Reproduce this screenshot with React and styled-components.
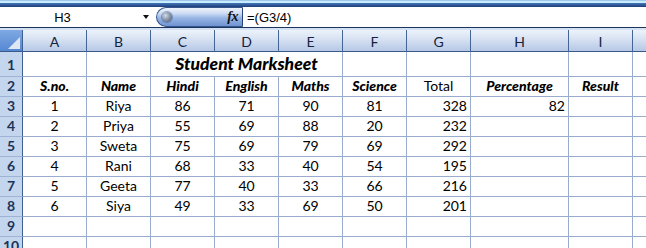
import React from 'react';
import styled, { createGlobalStyle, css } from 'styled-components';

const GlobalStyle = createGlobalStyle`
  html, body {
    margin: 0;
    padding: 0;
    background: #fff;
    overflow: hidden;
  }
  body {
    width: 646px;
    height: 248px;
  }
`;

const Window = styled.div`
  width: 646px;
  height: 248px;
  overflow: hidden;
  display: flex;
  flex-direction: column;
  background: #fff;
`;

const RibbonEdge = styled.div`
  height: 7px;
  flex: none;
  background: linear-gradient(
    to bottom,
    #a2c5ec 0px,
    #a2c5ec 1px,
    #c6eefd 1px,
    #c6eefd 3px,
    #4677bd 3px,
    #30599a 5px,
    #1f3f74 7px
  );
`;

const FormulaBar = styled.div`
  height: 20px;
  flex: none;
  display: flex;
  align-items: stretch;
  font-family: 'Liberation Sans', Arial, sans-serif;
  font-size: 13px;
  color: #000;
`;

const NameBox = styled.div`
  width: 152px;
  display: flex;
  align-items: center;
`;

const NameText = styled.span`
  flex: 1;
  text-align: center;
  padding-right: 20px;
  padding-left: 2px;
`;

const DropArrow = styled.span`
  width: 0;
  height: 0;
  margin-right: 3px;
  border-left: 3.5px solid transparent;
  border-right: 3.5px solid transparent;
  border-top: 4px solid #111;
`;

const FxPill = styled.div`
  margin-left: 4px;
  width: 87px;
  box-sizing: border-box;
  border: 1px solid #34558f;
  border-right: 1px solid #2a4679;
  border-radius: 10px 0 0 10px;
  background: linear-gradient(
    to bottom,
    #eef3fb 0%,
    #cddcf3 30%,
    #98b5e4 55%,
    #6f93d0 100%
  );
  display: flex;
  align-items: center;
  justify-content: space-between;
  padding: 0 3px 0 5px;
`;

const FxKnob = styled.span`
  width: 10px;
  height: 10px;
  border-radius: 50%;
  background: radial-gradient(circle at 35% 35%, #d3dbe7 0%, #7d8aa0 55%, #4a566d 100%);
  box-shadow: 0 0 0 1px rgba(50, 70, 110, 0.4);
`;

const FxLabel = styled.span`
  font-family: 'Liberation Serif', 'Times New Roman', serif;
  font-style: italic;
  font-weight: bold;
  font-size: 14px;
  letter-spacing: -0.5px;
  color: #111;
  padding-right: 1px;
`;

const FormulaText = styled.div`
  flex: 1;
  display: flex;
  align-items: center;
  padding-left: 4px;
`;

const Sheet = styled.div`
  flex: none;
  border-top: 1px solid #1d355b;
  padding-top: 2px;
  background: #d3e1f3;
  display: grid;
  grid-template-columns: 23px repeat(7, 64px) 98px 64px 1fr;
  grid-template-rows: 22px 25px repeat(9, 20px);
  font-family: Lato, 'Open Sans', sans-serif;
  font-size: 14px;
  color: #000;
`;

const Corner = styled.div`
  position: relative;
  box-sizing: border-box;
  border-right: 1px solid #3f5f90;
  border-bottom: 1px solid #3b5a8a;
  background: linear-gradient(to bottom, #7fa9e3, #5587d2);
  &::after {
    content: '';
    position: absolute;
    right: 2px;
    bottom: 2px;
    width: 0;
    height: 0;
    border-left: 12px solid transparent;
    border-bottom: 12px solid #dfe7f3;
  }
`;

const ColHead = styled.div`
  box-sizing: border-box;
  border-right: ${(p) => (p.$last ? 'none' : '1px solid #45659a')};
  border-bottom: 1px solid #3b5a8a;
  background: linear-gradient(to bottom, #eef3fb 0%, #d6e1f2 45%, #b6c8e6 100%);
  display: flex;
  align-items: center;
  justify-content: center;
  padding-top: 1px;
  font-size: 14px;
  color: #16233c;
`;

const RowHead = styled.div`
  box-sizing: border-box;
  border-right: 1px solid #3f5f90;
  border-bottom: 1px solid #9db2d4;
  background: #c4d6ee;
  display: flex;
  align-items: flex-end;
  justify-content: center;
  padding-bottom: ${(p) => (p.$tall ? '3px' : '2px')};
  font-weight: bold;
  font-size: 14px;
  color: #1c3358;
`;

const Cell = styled.div`
  box-sizing: border-box;
  background: #fff;
  border-right: ${(p) => (p.$last ? 'none' : '1px solid #9aabd0')};
  border-bottom: 1px solid #9aabd0;
  display: flex;
  align-items: flex-end;
  padding: 0 3px 2px 3px;
  white-space: nowrap;
  grid-column: ${(p) => (p.$span ? `span ${p.$span}` : 'auto')};
  justify-content: ${(p) =>
    p.$align === 'right' ? 'flex-end' : p.$align === 'left' ? 'flex-start' : 'center'};
  ${(p) =>
    p.$head &&
    css`
      font-weight: 900;
      font-style: italic;
    `}
  ${(p) =>
    p.$title &&
    css`
      font-weight: 900;
      font-style: italic;
      font-size: 17.5px;
      padding-bottom: 2px;
    `}
`;

const columns = ['A', 'B', 'C', 'D', 'E', 'F', 'G', 'H', 'I'];

const headers = [
  { text: 'S.no.', head: true },
  { text: 'Name', head: true },
  { text: 'Hindi', head: true },
  { text: 'English', head: true },
  { text: 'Maths', head: true },
  { text: 'Science', head: true },
  { text: 'Total', head: false },
  { text: 'Percentage', head: true },
  { text: 'Result', head: true },
];

const students = [
  { sno: 1, name: 'Riya', marks: [86, 71, 90, 81], total: 328, pct: 82 },
  { sno: 2, name: 'Priya', marks: [55, 69, 88, 20], total: 232 },
  { sno: 3, name: 'Sweta', marks: [75, 69, 79, 69], total: 292 },
  { sno: 4, name: 'Rani', marks: [68, 33, 40, 54], total: 195 },
  { sno: 5, name: 'Geeta', marks: [77, 40, 33, 66], total: 216 },
  { sno: 6, name: 'Siya', marks: [49, 33, 69, 50], total: 201 },
];

const EmptyRow = ({ n }) => (
  <>
    <RowHead>{n}</RowHead>
    {columns.map((c) => (
      <Cell key={c} />
    ))}
    <Cell $last />
  </>
);

export default function App() {
  return (
    <Window>
      <GlobalStyle />
      <RibbonEdge />
      <FormulaBar>
        <NameBox>
          <NameText>H3</NameText>
          <DropArrow />
        </NameBox>
        <FxPill>
          <FxKnob />
          <FxLabel>fx</FxLabel>
        </FxPill>
        <FormulaText>=(G3/4)</FormulaText>
      </FormulaBar>

      <Sheet>
        <Corner />
        {columns.map((c) => (
          <ColHead key={c}>{c}</ColHead>
        ))}
        <ColHead $last />

        {/* row 1 - title merged over C:E */}
        <RowHead $tall>1</RowHead>
        <Cell />
        <Cell />
        <Cell $span={3} $title>
          Student Marksheet
        </Cell>
        <Cell />
        <Cell />
        <Cell />
        <Cell />
        <Cell $last />

        {/* row 2 - column titles */}
        <RowHead>2</RowHead>
        {headers.map((h) => (
          <Cell key={h.text} $head={h.head}>
            {h.text}
          </Cell>
        ))}
        <Cell $last />

        {students.map((s, i) => (
          <React.Fragment key={s.sno}>
            <RowHead>{i + 3}</RowHead>
            <Cell>{s.sno}</Cell>
            <Cell>{s.name}</Cell>
            {s.marks.map((m, j) => (
              <Cell key={j}>{m}</Cell>
            ))}
            <Cell $align="right">{s.total}</Cell>
            <Cell $align="right">{s.pct ?? ''}</Cell>
            <Cell />
            <Cell $last />
          </React.Fragment>
        ))}

        <EmptyRow n={9} />
        <EmptyRow n={10} />
      </Sheet>
    </Window>
  );
}
